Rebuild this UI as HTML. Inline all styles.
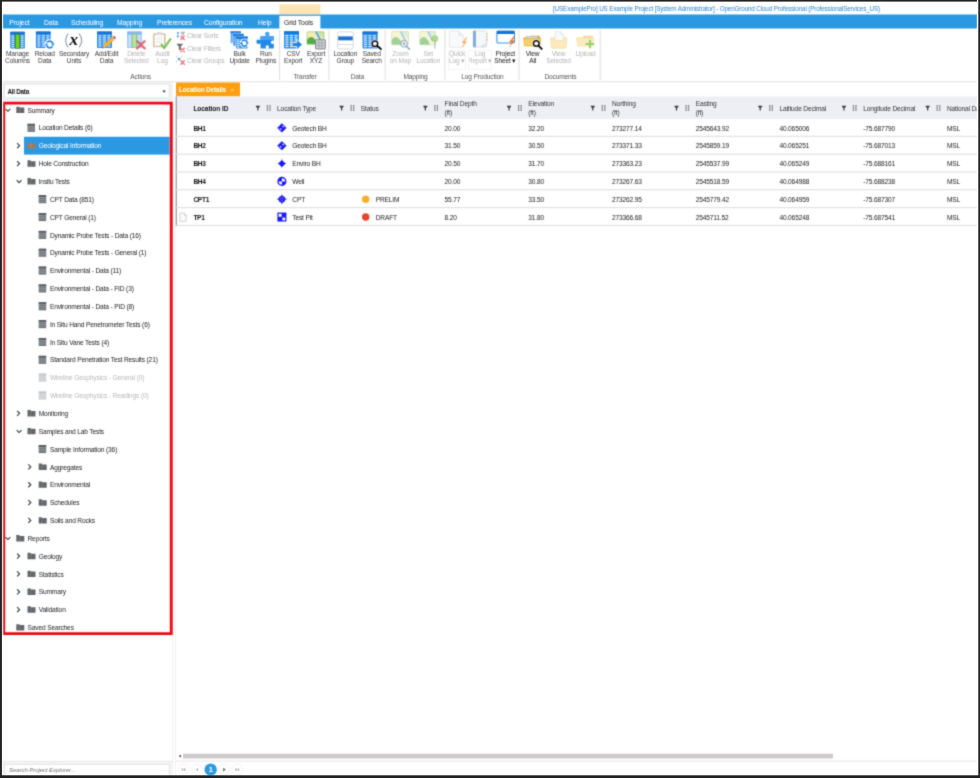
<!DOCTYPE html><html><head><meta charset="utf-8"><title>OpenGround Cloud Professional</title><style>
*{box-sizing:border-box;margin:0;padding:0}
html,body{width:980px;height:778px;overflow:hidden;background:#fff}
body{font-family:"Liberation Sans",sans-serif;font-size:6.6px;color:#222;position:relative;letter-spacing:-0.15px}
.a{position:absolute}
.t{position:absolute;white-space:nowrap;line-height:8px}
.c{position:absolute;white-space:nowrap;color:#3a3a3a;text-align:center;transform:translateX(-50%);line-height:6.5px}
#wrap{position:absolute;left:0;top:0;width:980px;height:778px;background:#fff;filter:url(#soft)}
#frame{position:absolute;left:0;top:0;z-index:50}
.mi{position:absolute;top:18px;color:#fff;font-size:6.8px;line-height:9px;white-space:nowrap}
.dis{color:#b4b4b4}
.gl{color:#555}
</style></head><body>
<svg width="0" height="0" style="position:absolute"><defs><filter id="soft" x="0" y="0" width="100%" height="100%" color-interpolation-filters="sRGB"><feConvolveMatrix order="3" kernelMatrix="0.026 0.110 0.026 0.110 0.456 0.110 0.026 0.110 0.026" divisor="1" edgeMode="duplicate" preserveAlpha="true"/></filter></defs></svg>
<svg id="frame" width="980" height="778" viewBox="0 0 980 778"><rect x="0" y="0" width="980" height="1.600" fill="#222"/><rect x="0" y="0" width="1.900" height="778" fill="#222"/><rect x="977" y="0" width="1.500" height="778" fill="#fff"/><rect x="978.300" y="0" width="1.700" height="778" fill="#222"/><rect x="0" y="775.300" width="980" height="2.700" fill="#222"/></svg><div id="wrap">
<svg class="a" style="left:0;top:0" width="980" height="778" viewBox="0 0 980 778"><rect x="279.4" y="4.4" width="41.0" height="10.1" fill="#fde4b2"/><rect x="3" y="14.5" width="974" height="14" fill="#2b99e2"/><rect x="279.4" y="15.8" width="41.0" height="13.7" fill="#fff"/><rect x="3" y="81.2" width="974" height="1.0" fill="#e2e2e2"/><rect x="279.1" y="30" width="1" height="50" fill="#dedede"/><rect x="328.40000000000003" y="30" width="1" height="50" fill="#dedede"/><rect x="384.6" y="30" width="1" height="50" fill="#dedede"/><rect x="444.40000000000003" y="30" width="1" height="50" fill="#dedede"/><rect x="518.5" y="30" width="1" height="50" fill="#dedede"/><rect x="599.7" y="30" width="1" height="50" fill="#dedede"/><rect x="2" y="81.8" width="170.8" height="19.6" fill="#f2f2f2"/><rect x="4.5" y="84.2" width="164.8" height="13.8" fill="#fff" stroke="#e2e2e2" stroke-width="0.9"/><path d="M162.300 90.400h3.600l-1.800 2.400z" fill="#3a3a3a"/><rect x="172.2" y="101" width="0.9" height="675" fill="#eeeeee"/><rect x="175.2" y="226" width="0.9" height="550" fill="#eef2f2"/><g transform="translate(5.00,108.00)"><path d="M0.500 0.800l2.400 2.500L5.300 0.800" stroke="#333" stroke-width="1.100" fill="none"/></g><g transform="translate(16.30,106.30)"><path d="M0 0.400h3l0.600 0.900H8v5.500H0z" fill="#63666b"/><path d="M3.300 1.300v5.400" stroke="#fff" stroke-width="0.300" opacity="0.4"/></g><g transform="translate(27.50,123.84)"><rect width="7.500" height="8" fill="#6c7178"/><path d="M0 2.300h7.500M0 4.200h7.500M0 6.100h7.500" stroke="#aeb2b8" stroke-width="0.600"/><rect width="7.500" height="1.500" fill="#555a61"/></g><rect x="24" y="136.77" width="145.6" height="17.84" fill="#2b99e2"/><g transform="translate(16.30,142.69)"><path d="M0.800 0.500l2.500 2.500L0.800 5.500" stroke="#333" stroke-width="1.100" fill="none"/></g><g transform="translate(27.50,141.99)"><path d="M0 0.400h3l0.600 0.900H8v5.500H0z" fill="#a07a5c"/><path d="M3.300 1.300v5.400" stroke="#fff" stroke-width="0.300" opacity="0.4"/></g><g transform="translate(16.30,160.53)"><path d="M0.800 0.500l2.500 2.500L0.800 5.500" stroke="#333" stroke-width="1.100" fill="none"/></g><g transform="translate(27.50,159.84)"><path d="M0 0.400h3l0.600 0.900H8v5.500H0z" fill="#63666b"/><path d="M3.300 1.300v5.400" stroke="#fff" stroke-width="0.300" opacity="0.4"/></g><g transform="translate(16.20,179.38)"><path d="M0.500 0.800l2.400 2.500L5.300 0.800" stroke="#333" stroke-width="1.100" fill="none"/></g><g transform="translate(27.50,177.68)"><path d="M0 0.400h3l0.600 0.900H8v5.500H0z" fill="#63666b"/><path d="M3.300 1.300v5.400" stroke="#fff" stroke-width="0.300" opacity="0.4"/></g><g transform="translate(38.70,195.22)"><rect width="7.500" height="8" fill="#6c7178"/><path d="M0 2.300h7.500M0 4.200h7.500M0 6.100h7.500" stroke="#aeb2b8" stroke-width="0.600"/><rect width="7.500" height="1.500" fill="#555a61"/></g><g transform="translate(38.70,213.07)"><rect width="7.500" height="8" fill="#6c7178"/><path d="M0 2.300h7.500M0 4.200h7.500M0 6.100h7.500" stroke="#aeb2b8" stroke-width="0.600"/><rect width="7.500" height="1.500" fill="#555a61"/></g><g transform="translate(38.70,230.91)"><rect width="7.500" height="8" fill="#6c7178"/><path d="M0 2.300h7.500M0 4.200h7.500M0 6.100h7.500" stroke="#aeb2b8" stroke-width="0.600"/><rect width="7.500" height="1.500" fill="#555a61"/></g><g transform="translate(38.70,248.76)"><rect width="7.500" height="8" fill="#6c7178"/><path d="M0 2.300h7.500M0 4.200h7.500M0 6.100h7.500" stroke="#aeb2b8" stroke-width="0.600"/><rect width="7.500" height="1.500" fill="#555a61"/></g><g transform="translate(38.70,266.61)"><rect width="7.500" height="8" fill="#6c7178"/><path d="M0 2.300h7.500M0 4.200h7.500M0 6.100h7.500" stroke="#aeb2b8" stroke-width="0.600"/><rect width="7.500" height="1.500" fill="#555a61"/></g><g transform="translate(38.70,284.45)"><rect width="7.500" height="8" fill="#6c7178"/><path d="M0 2.300h7.500M0 4.200h7.500M0 6.100h7.500" stroke="#aeb2b8" stroke-width="0.600"/><rect width="7.500" height="1.500" fill="#555a61"/></g><g transform="translate(38.70,302.29)"><rect width="7.500" height="8" fill="#6c7178"/><path d="M0 2.300h7.500M0 4.200h7.500M0 6.100h7.500" stroke="#aeb2b8" stroke-width="0.600"/><rect width="7.500" height="1.500" fill="#555a61"/></g><g transform="translate(38.70,320.14)"><rect width="7.500" height="8" fill="#6c7178"/><path d="M0 2.300h7.500M0 4.200h7.500M0 6.100h7.500" stroke="#aeb2b8" stroke-width="0.600"/><rect width="7.500" height="1.500" fill="#555a61"/></g><g transform="translate(38.70,337.99)"><rect width="7.500" height="8" fill="#6c7178"/><path d="M0 2.300h7.500M0 4.200h7.500M0 6.100h7.500" stroke="#aeb2b8" stroke-width="0.600"/><rect width="7.500" height="1.500" fill="#555a61"/></g><g transform="translate(38.70,355.83)"><rect width="7.500" height="8" fill="#6c7178"/><path d="M0 2.300h7.500M0 4.200h7.500M0 6.100h7.500" stroke="#aeb2b8" stroke-width="0.600"/><rect width="7.500" height="1.500" fill="#555a61"/></g><g transform="translate(38.70,373.67)" opacity="0.35"><rect width="7.500" height="8" fill="#6c7178"/><path d="M0 2.300h7.500M0 4.200h7.500M0 6.100h7.500" stroke="#aeb2b8" stroke-width="0.600"/><rect width="7.500" height="1.500" fill="#555a61"/></g><g transform="translate(38.70,391.52)" opacity="0.35"><rect width="7.500" height="8" fill="#6c7178"/><path d="M0 2.300h7.500M0 4.200h7.500M0 6.100h7.500" stroke="#aeb2b8" stroke-width="0.600"/><rect width="7.500" height="1.500" fill="#555a61"/></g><g transform="translate(16.30,410.37)"><path d="M0.800 0.500l2.500 2.500L0.800 5.500" stroke="#333" stroke-width="1.100" fill="none"/></g><g transform="translate(27.50,409.67)"><path d="M0 0.400h3l0.600 0.900H8v5.500H0z" fill="#63666b"/><path d="M3.300 1.300v5.400" stroke="#fff" stroke-width="0.300" opacity="0.4"/></g><g transform="translate(16.20,429.21)"><path d="M0.500 0.800l2.400 2.500L5.300 0.800" stroke="#333" stroke-width="1.100" fill="none"/></g><g transform="translate(27.50,427.51)"><path d="M0 0.400h3l0.600 0.900H8v5.500H0z" fill="#63666b"/><path d="M3.300 1.300v5.400" stroke="#fff" stroke-width="0.300" opacity="0.4"/></g><g transform="translate(38.70,445.05)"><rect width="7.500" height="8" fill="#6c7178"/><path d="M0 2.300h7.500M0 4.200h7.500M0 6.100h7.500" stroke="#aeb2b8" stroke-width="0.600"/><rect width="7.500" height="1.500" fill="#555a61"/></g><g transform="translate(27.50,463.90)"><path d="M0.800 0.500l2.500 2.500L0.800 5.500" stroke="#333" stroke-width="1.100" fill="none"/></g><g transform="translate(38.70,463.20)"><path d="M0 0.400h3l0.600 0.900H8v5.500H0z" fill="#63666b"/><path d="M3.300 1.300v5.400" stroke="#fff" stroke-width="0.300" opacity="0.4"/></g><g transform="translate(27.50,481.75)"><path d="M0.800 0.500l2.500 2.500L0.800 5.500" stroke="#333" stroke-width="1.100" fill="none"/></g><g transform="translate(38.70,481.05)"><path d="M0 0.400h3l0.600 0.900H8v5.500H0z" fill="#63666b"/><path d="M3.300 1.300v5.400" stroke="#fff" stroke-width="0.300" opacity="0.4"/></g><g transform="translate(27.50,499.59)"><path d="M0.800 0.500l2.500 2.500L0.800 5.500" stroke="#333" stroke-width="1.100" fill="none"/></g><g transform="translate(38.70,498.89)"><path d="M0 0.400h3l0.600 0.900H8v5.500H0z" fill="#63666b"/><path d="M3.300 1.300v5.400" stroke="#fff" stroke-width="0.300" opacity="0.4"/></g><g transform="translate(27.50,517.43)"><path d="M0.800 0.500l2.500 2.500L0.800 5.500" stroke="#333" stroke-width="1.100" fill="none"/></g><g transform="translate(38.70,516.73)"><path d="M0 0.400h3l0.600 0.900H8v5.500H0z" fill="#63666b"/><path d="M3.300 1.300v5.400" stroke="#fff" stroke-width="0.300" opacity="0.4"/></g><g transform="translate(5.00,536.28)"><path d="M0.500 0.800l2.400 2.500L5.300 0.800" stroke="#333" stroke-width="1.100" fill="none"/></g><g transform="translate(16.30,534.58)"><path d="M0 0.400h3l0.600 0.900H8v5.500H0z" fill="#63666b"/><path d="M3.300 1.300v5.400" stroke="#fff" stroke-width="0.300" opacity="0.4"/></g><g transform="translate(16.30,553.12)"><path d="M0.800 0.500l2.500 2.500L0.800 5.500" stroke="#333" stroke-width="1.100" fill="none"/></g><g transform="translate(27.50,552.42)"><path d="M0 0.400h3l0.600 0.900H8v5.500H0z" fill="#63666b"/><path d="M3.300 1.300v5.400" stroke="#fff" stroke-width="0.300" opacity="0.4"/></g><g transform="translate(16.30,570.97)"><path d="M0.800 0.500l2.500 2.500L0.800 5.500" stroke="#333" stroke-width="1.100" fill="none"/></g><g transform="translate(27.50,570.27)"><path d="M0 0.400h3l0.600 0.900H8v5.500H0z" fill="#63666b"/><path d="M3.300 1.300v5.400" stroke="#fff" stroke-width="0.300" opacity="0.4"/></g><g transform="translate(16.30,588.81)"><path d="M0.800 0.500l2.500 2.500L0.800 5.500" stroke="#333" stroke-width="1.100" fill="none"/></g><g transform="translate(27.50,588.11)"><path d="M0 0.400h3l0.600 0.900H8v5.500H0z" fill="#63666b"/><path d="M3.300 1.300v5.400" stroke="#fff" stroke-width="0.300" opacity="0.4"/></g><g transform="translate(16.30,606.66)"><path d="M0.800 0.500l2.500 2.500L0.800 5.500" stroke="#333" stroke-width="1.100" fill="none"/></g><g transform="translate(27.50,605.96)"><path d="M0 0.400h3l0.600 0.900H8v5.500H0z" fill="#63666b"/><path d="M3.300 1.300v5.400" stroke="#fff" stroke-width="0.300" opacity="0.4"/></g><g transform="translate(16.30,623.80)"><path d="M0 0.400h3l0.600 0.900H8v5.500H0z" fill="#63666b"/><path d="M3.300 1.300v5.400" stroke="#fff" stroke-width="0.300" opacity="0.4"/></g><rect x="2" y="761.4" width="170.8" height="15" fill="#f4f4f4"/><rect x="2.0" y="760.9" width="170.8" height="1.0" fill="#e8e8e8"/><rect x="4.5" y="764.3" width="164.8" height="14" fill="#fff" stroke="#e2e2e2" stroke-width="0.9"/><rect x="176.0" y="82.5" width="64.0" height="14.0" fill="#fe9f12"/><rect x="176.0" y="96.4" width="801.0" height="22.6" fill="#eeeff4"/><rect x="175.6" y="96.4" width="1.4" height="129.9" fill="#a4a4a4"/><g transform="translate(255.90,105.70)"><path d="M0 0h4v1L2.600 2.300v2.500H1.400V2.300L0 1z" fill="#3a3a3a"/></g><g transform="translate(266.80,105.20)"><rect x="0" y="0" width="1.300" height="1.300" fill="#5c5c5c"/><rect x="0" y="2.1" width="1.300" height="1.300" fill="#5c5c5c"/><rect x="0" y="4.2" width="1.300" height="1.300" fill="#5c5c5c"/><rect x="2.5" y="0" width="1.300" height="1.300" fill="#5c5c5c"/><rect x="2.5" y="2.1" width="1.300" height="1.300" fill="#5c5c5c"/><rect x="2.5" y="4.2" width="1.300" height="1.300" fill="#5c5c5c"/></g><g transform="translate(339.62,105.70)"><path d="M0 0h4v1L2.600 2.300v2.500H1.400V2.300L0 1z" fill="#3a3a3a"/></g><g transform="translate(350.52,105.20)"><rect x="0" y="0" width="1.300" height="1.300" fill="#5c5c5c"/><rect x="0" y="2.1" width="1.300" height="1.300" fill="#5c5c5c"/><rect x="0" y="4.2" width="1.300" height="1.300" fill="#5c5c5c"/><rect x="2.5" y="0" width="1.300" height="1.300" fill="#5c5c5c"/><rect x="2.5" y="2.1" width="1.300" height="1.300" fill="#5c5c5c"/><rect x="2.5" y="4.2" width="1.300" height="1.300" fill="#5c5c5c"/></g><g transform="translate(423.34,105.70)"><path d="M0 0h4v1L2.600 2.300v2.500H1.400V2.300L0 1z" fill="#3a3a3a"/></g><g transform="translate(434.24,105.20)"><rect x="0" y="0" width="1.300" height="1.300" fill="#5c5c5c"/><rect x="0" y="2.1" width="1.300" height="1.300" fill="#5c5c5c"/><rect x="0" y="4.2" width="1.300" height="1.300" fill="#5c5c5c"/><rect x="2.5" y="0" width="1.300" height="1.300" fill="#5c5c5c"/><rect x="2.5" y="2.1" width="1.300" height="1.300" fill="#5c5c5c"/><rect x="2.5" y="4.2" width="1.300" height="1.300" fill="#5c5c5c"/></g><g transform="translate(507.06,105.70)"><path d="M0 0h4v1L2.600 2.300v2.500H1.400V2.300L0 1z" fill="#3a3a3a"/></g><g transform="translate(517.96,105.20)"><rect x="0" y="0" width="1.300" height="1.300" fill="#5c5c5c"/><rect x="0" y="2.1" width="1.300" height="1.300" fill="#5c5c5c"/><rect x="0" y="4.2" width="1.300" height="1.300" fill="#5c5c5c"/><rect x="2.5" y="0" width="1.300" height="1.300" fill="#5c5c5c"/><rect x="2.5" y="2.1" width="1.300" height="1.300" fill="#5c5c5c"/><rect x="2.5" y="4.2" width="1.300" height="1.300" fill="#5c5c5c"/></g><g transform="translate(590.78,105.70)"><path d="M0 0h4v1L2.600 2.300v2.500H1.400V2.300L0 1z" fill="#3a3a3a"/></g><g transform="translate(601.68,105.20)"><rect x="0" y="0" width="1.300" height="1.300" fill="#5c5c5c"/><rect x="0" y="2.1" width="1.300" height="1.300" fill="#5c5c5c"/><rect x="0" y="4.2" width="1.300" height="1.300" fill="#5c5c5c"/><rect x="2.5" y="0" width="1.300" height="1.300" fill="#5c5c5c"/><rect x="2.5" y="2.1" width="1.300" height="1.300" fill="#5c5c5c"/><rect x="2.5" y="4.2" width="1.300" height="1.300" fill="#5c5c5c"/></g><g transform="translate(674.50,105.70)"><path d="M0 0h4v1L2.600 2.300v2.500H1.400V2.300L0 1z" fill="#3a3a3a"/></g><g transform="translate(685.40,105.20)"><rect x="0" y="0" width="1.300" height="1.300" fill="#5c5c5c"/><rect x="0" y="2.1" width="1.300" height="1.300" fill="#5c5c5c"/><rect x="0" y="4.2" width="1.300" height="1.300" fill="#5c5c5c"/><rect x="2.5" y="0" width="1.300" height="1.300" fill="#5c5c5c"/><rect x="2.5" y="2.1" width="1.300" height="1.300" fill="#5c5c5c"/><rect x="2.5" y="4.2" width="1.300" height="1.300" fill="#5c5c5c"/></g><g transform="translate(758.22,105.70)"><path d="M0 0h4v1L2.600 2.300v2.500H1.400V2.300L0 1z" fill="#3a3a3a"/></g><g transform="translate(769.12,105.20)"><rect x="0" y="0" width="1.300" height="1.300" fill="#5c5c5c"/><rect x="0" y="2.1" width="1.300" height="1.300" fill="#5c5c5c"/><rect x="0" y="4.2" width="1.300" height="1.300" fill="#5c5c5c"/><rect x="2.5" y="0" width="1.300" height="1.300" fill="#5c5c5c"/><rect x="2.5" y="2.1" width="1.300" height="1.300" fill="#5c5c5c"/><rect x="2.5" y="4.2" width="1.300" height="1.300" fill="#5c5c5c"/></g><g transform="translate(841.94,105.70)"><path d="M0 0h4v1L2.600 2.300v2.500H1.400V2.300L0 1z" fill="#3a3a3a"/></g><g transform="translate(852.84,105.20)"><rect x="0" y="0" width="1.300" height="1.300" fill="#5c5c5c"/><rect x="0" y="2.1" width="1.300" height="1.300" fill="#5c5c5c"/><rect x="0" y="4.2" width="1.300" height="1.300" fill="#5c5c5c"/><rect x="2.5" y="0" width="1.300" height="1.300" fill="#5c5c5c"/><rect x="2.5" y="2.1" width="1.300" height="1.300" fill="#5c5c5c"/><rect x="2.5" y="4.2" width="1.300" height="1.300" fill="#5c5c5c"/></g><g transform="translate(925.66,105.70)"><path d="M0 0h4v1L2.600 2.300v2.500H1.400V2.300L0 1z" fill="#3a3a3a"/></g><g transform="translate(936.56,105.20)"><rect x="0" y="0" width="1.300" height="1.300" fill="#5c5c5c"/><rect x="0" y="2.1" width="1.300" height="1.300" fill="#5c5c5c"/><rect x="0" y="4.2" width="1.300" height="1.300" fill="#5c5c5c"/><rect x="2.5" y="0" width="1.300" height="1.300" fill="#5c5c5c"/><rect x="2.5" y="2.1" width="1.300" height="1.300" fill="#5c5c5c"/><rect x="2.5" y="4.2" width="1.300" height="1.300" fill="#5c5c5c"/></g><rect x="176" y="135.75" width="802" height="1.1" fill="#dfdfe2"/><g transform="translate(277.40,123.40)"><path d="M4.500 0.200L8.800 4.500 4.500 8.800 0.200 4.500z" fill="#1818fa" stroke="#1818fa" stroke-width="0.600" stroke-linejoin="round"/><path d="M5.100 3.900V1.900L7.100 3.900zM3.900 5.100V7.100L1.900 5.100z" fill="#fff"/></g><rect x="176" y="153.58" width="802" height="1.1" fill="#dfdfe2"/><g transform="translate(277.40,141.23)"><path d="M4.500 0.200L8.800 4.500 4.500 8.800 0.200 4.500z" fill="#1818fa" stroke="#1818fa" stroke-width="0.600" stroke-linejoin="round"/><path d="M5.100 3.900V1.900L7.100 3.900zM3.900 5.100V7.100L1.900 5.100z" fill="#fff"/></g><rect x="176" y="171.41" width="802" height="1.1" fill="#dfdfe2"/><g transform="translate(277.40,159.06)"><path d="M4.500 0L5.800 3.200 9 4.500 5.800 5.800 4.500 9 3.200 5.800 0 4.500 3.200 3.200z" fill="#1818fa"/><circle cx="4.500" cy="4.500" r="2.600" fill="#1818fa"/></g><rect x="176" y="189.24" width="802" height="1.1" fill="#dfdfe2"/><g transform="translate(277.40,176.89)"><circle cx="4.500" cy="4.500" r="3.900" fill="#fff" stroke="#1818fa" stroke-width="1.300"/><path d="M4.500 4.500V0.600A3.900 3.900 0 0 0 0.600 4.500zM4.500 4.500V8.400A3.900 3.900 0 0 0 8.400 4.500z" fill="#1818fa"/></g><rect x="176" y="207.07" width="802" height="1.1" fill="#dfdfe2"/><g transform="translate(277.40,194.72)"><circle cx="4.500" cy="4.500" r="3.300" fill="#1818fa"/><path d="M4.500 0v9M0 4.500h9" stroke="#1818fa" stroke-width="1.200"/><circle cx="4.500" cy="4.500" r="1.500" fill="none" stroke="#9c9cff" stroke-width="0.500"/></g><circle cx="365.700" cy="199.22" r="3.700" fill="#f9ae2c"/><rect x="176" y="224.9" width="802" height="1.1" fill="#dfdfe2"/><g transform="translate(277.40,212.55)"><rect width="9" height="9" fill="#1818fa"/><rect x="1.200" y="1.200" width="3" height="3" fill="#fff"/><rect x="5" y="5" width="2.800" height="2.800" fill="#fff"/></g><circle cx="365.700" cy="217.05" r="3.700" fill="#e8432e"/><g transform="translate(179.60,212.65)"><path d="M0.400 0.400h4l2.200 2.200v6H0.400z" fill="#fcfcfc" stroke="#bdbdbd" stroke-width="0.700"/><path d="M4.400 0.400v2.200h2.200" fill="none" stroke="#bdbdbd" stroke-width="0.600"/></g><rect x="183.0" y="753.7" width="650.0" height="4.8" fill="#cdcbcc"/><path d="M178.700 756.100l2.200-1.300v2.600z" fill="#333"/><rect x="176.0" y="760.6" width="801.0" height="1.0" fill="#e6e6e6"/><circle cx="183.7" cy="769.600" r="5.500" fill="#fff" stroke="#f0f0f0" stroke-width="0.900"/><circle cx="197.1" cy="769.600" r="5.500" fill="#fff" stroke="#f0f0f0" stroke-width="0.900"/><circle cx="224" cy="769.600" r="5.500" fill="#fff" stroke="#f0f0f0" stroke-width="0.900"/><circle cx="237.2" cy="769.600" r="5.500" fill="#fff" stroke="#f0f0f0" stroke-width="0.900"/><circle cx="210.700" cy="769.600" r="6.200" fill="#2b99e2"/><path d="M182.300 768.200v2.800" stroke="#888" stroke-width="0.700"/><path d="M185.300 768.200l-2 1.400 2 1.400z" fill="#888"/><path d="M198 768.200l-2 1.400 2 1.400z" fill="#999"/><path d="M223.200 767.900l2.400 1.700-2.400 1.700z" fill="#444"/><path d="M238.600 768.200v2.800" stroke="#888" stroke-width="0.700"/><path d="M235.600 768.200l2 1.400-2 1.400z" fill="#888"/></svg>
<div class="t" style="left:553px;top:4.5px;color:#2a86d0;font-size:6.3px;letter-spacing:-0.14px">[USExamplePro] US Example Project [System Administrator] - OpenGround Cloud Professional (ProfessionalServices_US)</div>
<div class="mi" style="left:9.3px">Project</div>
<div class="mi" style="left:44px">Data</div>
<div class="mi" style="left:71px">Scheduling</div>
<div class="mi" style="left:117px">Mapping</div>
<div class="mi" style="left:157px">Preferences</div>
<div class="mi" style="left:204px">Configuration</div>
<div class="mi" style="left:258px">Help</div>
<div class="mi" style="left:284px;color:#222">Grid Tools</div>
<svg class="a" style="left:0;top:0" width="620" height="82" viewBox="0 0 620 82"><g transform="translate(10.2,31.7)"><rect width="14.7" height="16.8" rx="0.8" fill="#2e8fe8"/><rect width="14.7" height="2.6" rx="0.6" fill="#1673d2"/><rect x="1.3" y="3.8" width="2.8" height="1.16" fill="#e4f1fd"/><rect x="10.6" y="3.8" width="2.8" height="1.16" fill="#e4f1fd"/><rect x="1.3" y="5.9" width="2.8" height="1.16" fill="#e4f1fd"/><rect x="10.6" y="5.9" width="2.8" height="1.16" fill="#e4f1fd"/><rect x="1.3" y="8" width="2.8" height="1.16" fill="#e4f1fd"/><rect x="10.6" y="8" width="2.8" height="1.16" fill="#e4f1fd"/><rect x="1.3" y="10.1" width="2.8" height="1.16" fill="#e4f1fd"/><rect x="10.6" y="10.1" width="2.8" height="1.16" fill="#e4f1fd"/><rect x="1.3" y="12.2" width="2.8" height="1.16" fill="#e4f1fd"/><rect x="10.6" y="12.2" width="2.8" height="1.16" fill="#e4f1fd"/><rect x="1.3" y="14.3" width="2.8" height="1.16" fill="#e4f1fd"/><rect x="10.6" y="14.3" width="2.8" height="1.16" fill="#e4f1fd"/><rect x="4.9" y="2.200" width="4.900" height="14.600" fill="#2a7a10"/><rect x="5.600" y="2.900" width="3.500" height="13.300" fill="#70d41c"/></g><g transform="translate(35.9,31.4)"><rect width="14.7" height="16.6" rx="0.8" fill="#2e8fe8"/><rect width="14.7" height="2.6" rx="0.6" fill="#1673d2"/><rect x="1.4" y="3.8" width="3" height="1.14" fill="#e4f1fd"/><rect x="5.9" y="3.8" width="3" height="1.14" fill="#e4f1fd"/><rect x="10.4" y="3.8" width="3" height="1.14" fill="#e4f1fd"/><rect x="1.4" y="5.87" width="3" height="1.14" fill="#e4f1fd"/><rect x="5.9" y="5.87" width="3" height="1.14" fill="#e4f1fd"/><rect x="10.4" y="5.87" width="3" height="1.14" fill="#e4f1fd"/><rect x="1.4" y="7.93" width="3" height="1.14" fill="#e4f1fd"/><rect x="5.9" y="7.93" width="3" height="1.14" fill="#e4f1fd"/><rect x="10.4" y="7.93" width="3" height="1.14" fill="#e4f1fd"/><rect x="1.4" y="10" width="3" height="1.14" fill="#e4f1fd"/><rect x="5.9" y="10" width="3" height="1.14" fill="#e4f1fd"/><rect x="10.4" y="10" width="3" height="1.14" fill="#e4f1fd"/><rect x="1.4" y="12.07" width="3" height="1.14" fill="#e4f1fd"/><rect x="5.9" y="12.07" width="3" height="1.14" fill="#e4f1fd"/><rect x="10.4" y="12.07" width="3" height="1.14" fill="#e4f1fd"/><rect x="1.4" y="14.13" width="3" height="1.14" fill="#e4f1fd"/><rect x="5.9" y="14.13" width="3" height="1.14" fill="#e4f1fd"/><rect x="10.4" y="14.13" width="3" height="1.14" fill="#e4f1fd"/><circle cx="13.8" cy="13.1" r="5.2" fill="#fff"/><circle cx="13.8" cy="13.1" r="3.3" fill="none" stroke="#1b84e6" stroke-width="1.7" stroke-dasharray="6.84 3.52" stroke-dashoffset="-1.76"/><path d="M15.2 12.2h3.6l-1.8 2.3z" fill="#1b84e6"/><path d="M8.8 14h3.6l-1.8-2.3z" fill="#1b84e6"/></g><g transform="translate(64.9,33.2)"><text x="8.700" y="11.900" font-family="Liberation Serif,serif" font-style="italic" font-weight="bold" font-size="17" text-anchor="middle" fill="#0a0a0a">x</text><path d="M3.300 0.300Q-1.800 7.200 3.300 14.200" stroke="#7e8796" stroke-width="1" fill="none"/><path d="M14.200 0.300Q19.300 7.200 14.200 14.200" stroke="#7e8796" stroke-width="1" fill="none"/></g><g transform="translate(97,31.4)"><rect width="15" height="16.6" rx="0.8" fill="#2e8fe8"/><rect width="15" height="2.6" rx="0.6" fill="#1673d2"/><rect x="1.4" y="3.8" width="3" height="1.14" fill="#e4f1fd"/><rect x="5.9" y="3.8" width="3" height="1.14" fill="#e4f1fd"/><rect x="10.4" y="3.8" width="3" height="1.14" fill="#e4f1fd"/><rect x="1.4" y="5.87" width="3" height="1.14" fill="#e4f1fd"/><rect x="5.9" y="5.87" width="3" height="1.14" fill="#e4f1fd"/><rect x="10.4" y="5.87" width="3" height="1.14" fill="#e4f1fd"/><rect x="1.4" y="7.93" width="3" height="1.14" fill="#e4f1fd"/><rect x="5.9" y="7.93" width="3" height="1.14" fill="#e4f1fd"/><rect x="10.4" y="7.93" width="3" height="1.14" fill="#e4f1fd"/><rect x="1.4" y="10" width="3" height="1.14" fill="#e4f1fd"/><rect x="5.9" y="10" width="3" height="1.14" fill="#e4f1fd"/><rect x="10.4" y="10" width="3" height="1.14" fill="#e4f1fd"/><rect x="1.4" y="12.07" width="3" height="1.14" fill="#e4f1fd"/><rect x="5.9" y="12.07" width="3" height="1.14" fill="#e4f1fd"/><rect x="10.4" y="12.07" width="3" height="1.14" fill="#e4f1fd"/><rect x="1.4" y="14.13" width="3" height="1.14" fill="#e4f1fd"/><rect x="5.9" y="14.13" width="3" height="1.14" fill="#e4f1fd"/><rect x="10.4" y="14.13" width="3" height="1.14" fill="#e4f1fd"/><g transform="translate(5.300,16.900) rotate(-42.200)"><path d="M0 0L3.400-1.800V1.800z" fill="#d9b48a"/><path d="M0 0L1.300-0.700V0.700z" fill="#3a2a1a"/><rect x="3.400" y="-1.800" width="10.600" height="3.600" fill="#f5a21c"/><rect x="3.400" y="-0.600" width="10.600" height="1.200" fill="#ffc040"/><rect x="14" y="-1.800" width="1" height="3.600" fill="#b8b8b8"/><rect x="15" y="-1.800" width="2.300" height="3.600" rx="0.700" fill="#df6f55"/></g></g><g transform="translate(127.1,31.6)" opacity="0.5"><rect width="14.7" height="16.4" rx="0.8" fill="#2e8fe8"/><rect width="14.7" height="2.6" rx="0.6" fill="#1673d2"/><rect x="1.3" y="3.8" width="2.8" height="1.12" fill="#e4f1fd"/><rect x="10.6" y="3.8" width="2.8" height="1.12" fill="#e4f1fd"/><rect x="1.3" y="5.83" width="2.8" height="1.12" fill="#e4f1fd"/><rect x="10.6" y="5.83" width="2.8" height="1.12" fill="#e4f1fd"/><rect x="1.3" y="7.87" width="2.8" height="1.12" fill="#e4f1fd"/><rect x="10.6" y="7.87" width="2.8" height="1.12" fill="#e4f1fd"/><rect x="1.3" y="9.9" width="2.8" height="1.12" fill="#e4f1fd"/><rect x="10.6" y="9.9" width="2.8" height="1.12" fill="#e4f1fd"/><rect x="1.3" y="11.93" width="2.8" height="1.12" fill="#e4f1fd"/><rect x="10.6" y="11.93" width="2.8" height="1.12" fill="#e4f1fd"/><rect x="1.3" y="13.97" width="2.8" height="1.12" fill="#e4f1fd"/><rect x="10.6" y="13.97" width="2.8" height="1.12" fill="#e4f1fd"/><rect x="4.9" y="2.200" width="4.900" height="14.200" fill="#2a7a10"/><rect x="5.600" y="2.900" width="3.500" height="12.900" fill="#70d41c"/></g><g transform="translate(127.1,31.6)"><path d="M10 9.600l7.600 7.200M17.600 9.600l-7.600 7.200" stroke="#e2555c" stroke-width="2.300" stroke-linecap="round" opacity="0.85"/></g><g transform="translate(152.9,31.9)" opacity="0.6"><rect x="0" y="1.400" width="12.800" height="14" rx="1.200" fill="#c9a06c"/><rect x="1.700" y="3" width="9.400" height="10.800" fill="#fbfbfc"/><rect x="3.900" y="0" width="5" height="3" rx="1" fill="#c4c4c4"/><rect x="3" y="5.2" width="6.800" height="0.600" fill="#d4d4d8"/><rect x="3" y="7" width="6.800" height="0.600" fill="#d4d4d8"/><rect x="3" y="8.8" width="6.800" height="0.600" fill="#d4d4d8"/><rect x="3" y="10.6" width="6.800" height="0.600" fill="#d4d4d8"/></g><g transform="translate(152.9,31.9)"><path d="M8.700 12.800l2.600 3.400 6.200-9" stroke="#69be48" stroke-width="2.300" fill="none" stroke-linecap="round" stroke-linejoin="round" opacity="0.85"/></g><g transform="translate(176,31.5)"><path d="M1.900 0.700v5M0.800 1.800L1.900 0.500 3 1.800M0.800 4.600L1.900 5.900 3 4.600" stroke="#4a9ff0" stroke-width="0.900" fill="none"/><path d="M4.700 0.800h4.200M5.300 2.200h3M5.900 3.600h1.800" stroke="#9a9a9a" stroke-width="0.900"/><path d="M4.9 4.6l3.400 3.400M8.3 4.6l-3.400 3.400" stroke="#e8555c" stroke-width="1.300" stroke-linecap="round" opacity="0.85"/></g><g transform="translate(176,43.5)"><path d="M0.300 0.300h7l-2.600 2.900v3.600h-1.800v-3.600z" fill="#6e6e6e"/><path d="M4.9 4.8l3.400 3.400M8.3 4.8l-3.400 3.400" stroke="#e8555c" stroke-width="1.300" stroke-linecap="round" opacity="0.85"/></g><g transform="translate(176,56)"><rect x="1.900" y="1.900" width="2.300" height="2.300" fill="#4a9ff0"/><path d="M0.300 0.300l1 1M5.800 0.300l-1 1M0.300 5.800l1-1" stroke="#8a8a8a" stroke-width="0.700"/><path d="M4.9 4.8l3.400 3.400M8.3 4.8l-3.400 3.400" stroke="#e8555c" stroke-width="1.300" stroke-linecap="round" opacity="0.85"/></g><g transform="translate(230.4,31.2)"><rect x="0" y="0" width="10.5" height="12" rx="0.6" fill="#5aa8ee" stroke="#fff" stroke-width="0.500"/><rect x="0" y="0" width="10.5" height="2" fill="#2a86de"/><rect x="2.6" y="2.6" width="10.8" height="12.2" rx="0.6" fill="#4a9fec" stroke="#fff" stroke-width="0.500"/><rect x="2.6" y="2.6" width="10.8" height="2" fill="#2080dc"/><rect x="5.4" y="5.3" width="12" height="12.3" rx="0.6" fill="#3a96ea" stroke="#fff" stroke-width="0.500"/><rect x="5.4" y="5.3" width="12" height="2" fill="#1673d2"/><rect x="6.4" y="8.3" width="2.600" height="1" fill="#d8ebfc"/><rect x="6.4" y="10.1" width="2.600" height="1" fill="#d8ebfc"/><rect x="6.4" y="11.9" width="2.600" height="1" fill="#d8ebfc"/><rect x="6.4" y="13.7" width="2.600" height="1" fill="#d8ebfc"/><rect x="6.4" y="15.5" width="2.600" height="1" fill="#d8ebfc"/><circle cx="13.9" cy="11.9" r="4.6" fill="#fff"/><circle cx="13.9" cy="11.9" r="3" fill="none" stroke="#1b84e6" stroke-width="1.6" stroke-dasharray="6.22 3.2" stroke-dashoffset="-1.6"/><path d="M15 11h3.6l-1.8 2.3z" fill="#1b84e6"/><path d="M9.2 12.8h3.6l-1.8-2.3z" fill="#1b84e6"/></g><g transform="translate(256,31.2)"><rect x="4.500" y="4.900" width="13.300" height="12.400" rx="0.800" fill="#2188e8"/><rect x="4.500" y="4.900" width="13.300" height="4" rx="0.800" fill="#46a2f2"/><circle cx="11.300" cy="2.900" r="2.300" fill="#46a2f2"/><rect x="10.100" y="3.500" width="2.400" height="2.500" fill="#46a2f2"/><circle cx="2.600" cy="10.600" r="2.300" fill="#2188e8"/><rect x="3.300" y="9.400" width="2.400" height="2.400" fill="#2188e8"/><circle cx="16.600" cy="11" r="1.700" fill="#fff"/><rect x="16.600" y="10.100" width="1.600" height="1.800" fill="#fff"/><circle cx="11.300" cy="15.700" r="1.700" fill="#fff"/><rect x="10.400" y="15.700" width="1.800" height="1.900" fill="#fff"/></g><g transform="translate(284,31.2)"><rect width="15" height="17.2" rx="0.8" fill="#2e8fe8"/><rect width="15" height="2.6" rx="0.6" fill="#1673d2"/><rect x="1.4" y="3.8" width="3" height="1.19" fill="#e4f1fd"/><rect x="5.9" y="3.8" width="3" height="1.19" fill="#e4f1fd"/><rect x="10.4" y="3.8" width="3" height="1.19" fill="#e4f1fd"/><rect x="1.4" y="5.97" width="3" height="1.19" fill="#e4f1fd"/><rect x="5.9" y="5.97" width="3" height="1.19" fill="#e4f1fd"/><rect x="10.4" y="5.97" width="3" height="1.19" fill="#e4f1fd"/><rect x="1.4" y="8.13" width="3" height="1.19" fill="#e4f1fd"/><rect x="5.9" y="8.13" width="3" height="1.19" fill="#e4f1fd"/><rect x="10.4" y="8.13" width="3" height="1.19" fill="#e4f1fd"/><rect x="1.4" y="10.3" width="3" height="1.19" fill="#e4f1fd"/><rect x="5.9" y="10.3" width="3" height="1.19" fill="#e4f1fd"/><rect x="10.4" y="10.3" width="3" height="1.19" fill="#e4f1fd"/><rect x="1.4" y="12.47" width="3" height="1.19" fill="#e4f1fd"/><rect x="5.9" y="12.47" width="3" height="1.19" fill="#e4f1fd"/><rect x="10.4" y="12.47" width="3" height="1.19" fill="#e4f1fd"/><rect x="1.4" y="14.63" width="3" height="1.19" fill="#e4f1fd"/><rect x="5.9" y="14.63" width="3" height="1.19" fill="#e4f1fd"/><rect x="10.4" y="14.63" width="3" height="1.19" fill="#e4f1fd"/><path d="M8 11.400h4.800V8.200l5.600 5.200-5.600 5.200v-3.200H8z" fill="#1b84e6" stroke="#fff" stroke-width="0.800" stroke-linejoin="round"/></g><g transform="translate(307,31.8)"><rect width="17" height="12.4" rx="1" fill="#f7ecb0"/><path d="M0 12.4V7.69q3.4-4.46 6.8-1.24q3.4 2.48 4.25 5.95z" fill="#4fae45"/><path d="M7.65 0h9.35v6.82z" fill="#c6e6a6"/><path d="M8.84 0l5.1 8.93" stroke="#5aaae8" stroke-width="1.9" fill="none"/><rect width="17" height="12.4" rx="1" fill="none" stroke="#8fbf62" stroke-width="0.6"/><rect x="8" y="7.500" width="10.800" height="10.100" rx="1.300" fill="#878b92"/><rect x="9" y="8.500" width="8.800" height="8.100" fill="#cfd2d8"/><path d="M9 11.200h8.800M9 13.900h8.800M11.900 8.500v8.100M14.900 8.500v8.100" stroke="#8f939a" stroke-width="0.600"/></g><g transform="translate(337.3,31.4)"><rect x="0.400" y="0.400" width="15.500" height="17.100" rx="1.500" fill="#fff" stroke="#d0d5da" stroke-width="0.900"/><rect x="0.900" y="5" width="14.500" height="3.900" fill="#1673d2"/><path d="M0.900 13.100h14.500" stroke="#d0d5da" stroke-width="0.800"/></g><g transform="translate(362.5,31.4)"><rect width="15.2" height="17.1" rx="0.8" fill="#2e8fe8"/><rect width="15.2" height="2.6" rx="0.6" fill="#1673d2"/><rect x="1.4" y="3.8" width="3" height="1.18" fill="#e4f1fd"/><rect x="5.9" y="3.8" width="3" height="1.18" fill="#e4f1fd"/><rect x="10.4" y="3.8" width="3" height="1.18" fill="#e4f1fd"/><rect x="1.4" y="5.95" width="3" height="1.18" fill="#e4f1fd"/><rect x="5.9" y="5.95" width="3" height="1.18" fill="#e4f1fd"/><rect x="10.4" y="5.95" width="3" height="1.18" fill="#e4f1fd"/><rect x="1.4" y="8.1" width="3" height="1.18" fill="#e4f1fd"/><rect x="5.9" y="8.1" width="3" height="1.18" fill="#e4f1fd"/><rect x="10.4" y="8.1" width="3" height="1.18" fill="#e4f1fd"/><rect x="1.4" y="10.25" width="3" height="1.18" fill="#e4f1fd"/><rect x="5.9" y="10.25" width="3" height="1.18" fill="#e4f1fd"/><rect x="10.4" y="10.25" width="3" height="1.18" fill="#e4f1fd"/><rect x="1.4" y="12.4" width="3" height="1.18" fill="#e4f1fd"/><rect x="5.9" y="12.4" width="3" height="1.18" fill="#e4f1fd"/><rect x="10.4" y="12.4" width="3" height="1.18" fill="#e4f1fd"/><rect x="1.4" y="14.55" width="3" height="1.18" fill="#e4f1fd"/><rect x="5.9" y="14.55" width="3" height="1.18" fill="#e4f1fd"/><rect x="10.4" y="14.55" width="3" height="1.18" fill="#e4f1fd"/><circle cx="12.4" cy="12.3" r="4" fill="#fff" opacity="0.9"/><circle cx="12.4" cy="12.3" r="2.8" fill="#fff" stroke="#111" stroke-width="1.5"/><path d="M14.5 14.4L18.4 17.7" stroke="#111" stroke-width="2" stroke-linecap="round"/></g><g transform="translate(391.7,31.4)" opacity="0.55"><rect width="16.9" height="13.4" rx="1" fill="#f7ecb0"/><path d="M0 13.4V8.31q3.38-4.82 6.76-1.34q3.38 2.68 4.22 6.43z" fill="#4fae45"/><path d="M7.6 0h9.29v7.37z" fill="#c6e6a6"/><path d="M8.79 0l5.07 9.65" stroke="#5aaae8" stroke-width="1.9" fill="none"/><rect width="16.9" height="13.4" rx="1" fill="none" stroke="#8fbf62" stroke-width="0.6"/></g><g transform="translate(391.7,31.4)" opacity="0.8"><circle cx="12.300" cy="12.300" r="3.200" fill="#eef2f8" stroke="#8fa2bf" stroke-width="1.100"/><circle cx="12.300" cy="12.300" r="1.100" fill="#6d8fc0"/><path d="M14.700 14.700l3 3" stroke="#7c92b5" stroke-width="1.600" stroke-linecap="round"/></g><g transform="translate(419.8,31.4)" opacity="0.55"><rect width="15.7" height="13.4" rx="1" fill="#f7ecb0"/><path d="M0 13.4V8.31q3.14-4.82 6.28-1.34q3.14 2.68 3.92 6.43z" fill="#4fae45"/><path d="M7.06 0h8.63v7.37z" fill="#c6e6a6"/><path d="M8.16 0l4.71 9.65" stroke="#5aaae8" stroke-width="1.9" fill="none"/><rect width="15.7" height="13.4" rx="1" fill="none" stroke="#8fbf62" stroke-width="0.6"/></g><g transform="translate(419.8,31.4)" opacity="0.85"><path d="M15.100 9.500v7.800" stroke="#a9b3c0" stroke-width="1.200"/><circle cx="15.100" cy="7.300" r="3.100" fill="#a4d482" stroke="#8cc468" stroke-width="0.500"/></g><g transform="translate(449,30.4)" opacity="0.65"><path d="M0.400 0.400h9.300l4.600 4.600v11.800H0.400z" fill="#f6f8fb" stroke="#cdd3da" stroke-width="0.800"/><path d="M9.700 0.400v4.600h4.600" fill="#e4e8ee" stroke="#cdd3da" stroke-width="0.700"/></g><g transform="translate(449,30.4)" opacity="0.85"><path transform="translate(17,7) scale(1.05)" d="M0 0l-4 5.400h2.300l-2.700 5 5.600-6.600h-2.400l2.600-3.800z" fill="#f6a550"/></g><g transform="translate(472.7,30.4)" opacity="0.7"><rect x="0.400" y="0.400" width="13.600" height="16.400" rx="1" fill="#f3f4f7" stroke="#c6ccd4" stroke-width="0.800"/><rect x="0.400" y="0.400" width="2.800" height="16.400" fill="#3f8acb"/><path d="M14.300 2.800v1.800" stroke="#6cc04a" stroke-width="1"/><path d="M14.300 5.600v1.800" stroke="#e9a040" stroke-width="1"/><path d="M14.300 8.400v1.800" stroke="#e0605a" stroke-width="1"/><path d="M9 16.800q4.600-.600 5-5.200-1.200 3.400-5 3.600z" fill="#d6dae0" stroke="#bfc5cd" stroke-width="0.500"/></g><g transform="translate(496.3,30.4)"><rect x="0.600" y="0.600" width="17.600" height="12" rx="1.200" fill="#fff" stroke="#3896ea" stroke-width="1.100"/><rect x="0.600" y="0.600" width="17.600" height="3" fill="#1673d2"/><path transform="translate(17.2,6) scale(1.1)" d="M0 0l-4 5.400h2.300l-2.700 5 5.600-6.600h-2.400l2.600-3.800z" fill="#f26f1a"/></g><g transform="translate(523.3,34.5)"><path d="M0.600 3h5.400l1.300-1.700h9.200v3.200H0.600z" fill="#dfa637"/><rect x="3" y="1.800" width="11.600" height="3" fill="#dcdcdc" stroke="#a8a8a8" stroke-width="0.400"/><path d="M0.200 4h17.500l-1.100 7.500H1.300z" fill="#f7d068" stroke="#d9a437" stroke-width="0.600"/><circle cx="13" cy="9" r="4" fill="#fff" opacity="0.9"/><circle cx="13" cy="9" r="2.8" fill="#fff" stroke="#111" stroke-width="1.5"/><path d="M15.1 11.1L18.4 14.4" stroke="#111" stroke-width="2" stroke-linecap="round"/></g><g transform="translate(550.2,31.3)" opacity="0.65"><path d="M5 0.400h5.600l3 3v7H5z" fill="#f6f8fb" stroke="#cdd3da" stroke-width="0.800"/><path d="M10.600 0.400v3h3" fill="#e4e8ee" stroke="#cdd3da" stroke-width="0.600"/><path d="M0.400 6.500h3.600v2.700h9.200V6.500h3.600l-.900 10.400H1.300z" fill="#fbe09a" stroke="#eccb78" stroke-width="0.700"/></g><g transform="translate(576.3,34.5)" opacity="0.65"><path d="M0.600 3h5.400l1.300-1.700h9.200v3.200H0.600z" fill="#ecc478"/><path d="M0.200 3.600h17.500l-1.100 7.900H1.300z" fill="#fbe09a" stroke="#eccb78" stroke-width="0.600"/></g><g transform="translate(576.3,34.5)" opacity="0.9"><path d="M13.700 5.200v8.600M9.400 9.500h8.600" stroke="#8ccf68" stroke-width="2.100"/></g></svg>
<div class="c" style="left:17.5px;top:51.3px">Manage<br>Columns</div>
<div class="c" style="left:44.7px;top:51.3px">Reload<br>Data</div>
<div class="c" style="left:74px;top:51.3px">Secondary<br>Units</div>
<div class="c" style="left:106.5px;top:51.3px">Add/Edit<br>Data</div>
<div class="c dis" style="left:136.3px;top:51.3px">Delete<br>Selected</div>
<div class="c dis" style="left:162.4px;top:51.3px">Audit<br>Log</div>
<div class="t dis" style="left:187px;top:32px">Clear Sorts</div>
<div class="t dis" style="left:187px;top:45px">Clear Filters</div>
<div class="t dis" style="left:187px;top:57px">Clear Groups</div>
<div class="c" style="left:239.6px;top:51.3px">Bulk<br>Update</div>
<div class="c" style="left:265.9px;top:51.3px">Run<br>Plugins</div>
<div class="c" style="left:293.2px;top:51.3px">CSV<br>Export</div>
<div class="c" style="left:316px;top:51.3px">Export<br>XYZ</div>
<div class="c" style="left:345.3px;top:51.3px">Location<br>Group</div>
<div class="c" style="left:371.7px;top:51.3px">Saved<br>Search</div>
<div class="c dis" style="left:400.4px;top:51.3px">Zoom<br>on Map</div>
<div class="c dis" style="left:428.3px;top:51.3px">Set<br>Location</div>
<div class="c dis" style="left:457px;top:51.3px">Quick<br>Log &#9662;</div>
<div class="c dis" style="left:480px;top:51.3px">Log<br>Report &#9662;</div>
<div class="c" style="left:505.3px;top:51.3px;color:#1c1c1c">Project<br>Sheet &#9662;</div>
<div class="c" style="left:532.6px;top:51.3px;color:#1c1c1c">View<br>All</div>
<div class="c dis" style="left:558.6px;top:51.3px">View<br>Selected</div>
<div class="c dis" style="left:585.6px;top:51.3px">Upload</div>
<div class="c gl" style="left:140.6px;top:72.500px;line-height:8px">Actions</div>
<div class="c gl" style="left:305px;top:72.500px;line-height:8px">Transfer</div>
<div class="c gl" style="left:357.3px;top:72.500px;line-height:8px">Data</div>
<div class="c gl" style="left:415.5px;top:72.500px;line-height:8px">Mapping</div>
<div class="c gl" style="left:482.4px;top:72.500px;line-height:8px">Log Production</div>
<div class="c gl" style="left:560.4px;top:72.500px;line-height:8px">Documents</div>
<div class="a" style="left:447.500px;top:49.500px;width:18px;height:20px;border:1px solid #f5f5f5"></div>
<div class="a" style="left:468px;top:49.500px;width:24px;height:20px;border:1px solid #f5f5f5"></div>
<div class="t" style="left:7.500px;top:88px;color:#111;font-weight:bold;letter-spacing:-0.3px;font-size:6.400px">All Data</div>
<svg class="a" style="left:0;top:0;z-index:5;pointer-events:none" width="180" height="640" viewBox="0 0 180 640"><path d="M3.200 101.700H172.700V635H3.200zM5.200 104.500V632.200H169.800V104.500z" fill="#f00612" fill-rule="evenodd"/></svg>
<div class="t" style="left:27.5px;top:107px;color:#222">Summary</div>
<div class="t" style="left:38.7px;top:124px;color:#222">Location Details (6)</div>
<div class="t" style="left:38.7px;top:142px;color:#fff">Geological Information</div>
<div class="t" style="left:38.7px;top:160px;color:#222">Hole Construction</div>
<div class="t" style="left:38.7px;top:178px;color:#222">Insitu Tests</div>
<div class="t" style="left:49.9px;top:196px;color:#222">CPT Data (851)</div>
<div class="t" style="left:49.9px;top:214px;color:#222">CPT General (1)</div>
<div class="t" style="left:49.9px;top:232px;color:#222">Dynamic Probe Tests - Data (16)</div>
<div class="t" style="left:49.9px;top:249px;color:#222">Dynamic Probe Tests - General (1)</div>
<div class="t" style="left:49.9px;top:267px;color:#222">Environmental - Data (11)</div>
<div class="t" style="left:49.9px;top:285px;color:#222">Environmental - Data - FID (3)</div>
<div class="t" style="left:49.9px;top:303px;color:#222">Environmental - Data - PID (8)</div>
<div class="t" style="left:49.9px;top:321px;color:#222">In Situ Hand Penetrometer Tests (6)</div>
<div class="t" style="left:49.9px;top:339px;color:#222">In Situ Vane Tests (4)</div>
<div class="t" style="left:49.9px;top:356px;color:#222">Standard Penetration Test Results (21)</div>
<div class="t" style="left:49.9px;top:374px;color:#b9b9b9">Wireline Geophysics - General (0)</div>
<div class="t" style="left:49.9px;top:392px;color:#b9b9b9">Wireline Geophysics - Readings (0)</div>
<div class="t" style="left:38.7px;top:410px;color:#222">Monitoring</div>
<div class="t" style="left:38.7px;top:428px;color:#222">Samples and Lab Tests</div>
<div class="t" style="left:49.9px;top:446px;color:#222">Sample Information (36)</div>
<div class="t" style="left:49.9px;top:464px;color:#222">Aggregates</div>
<div class="t" style="left:49.9px;top:481px;color:#222">Environmental</div>
<div class="t" style="left:49.9px;top:499px;color:#222">Schedules</div>
<div class="t" style="left:49.9px;top:517px;color:#222">Soils and Rocks</div>
<div class="t" style="left:27.5px;top:535px;color:#222">Reports</div>
<div class="t" style="left:38.7px;top:553px;color:#222">Geology</div>
<div class="t" style="left:38.7px;top:571px;color:#222">Statistics</div>
<div class="t" style="left:38.7px;top:588px;color:#222">Summary</div>
<div class="t" style="left:38.7px;top:606px;color:#222">Validation</div>
<div class="t" style="left:27.5px;top:624px;color:#222">Saved Searches</div>
<div class="t" style="left:9px;top:766px;color:#777;font-style:italic;font-size:6.200px">Search Project Explorer...</div>
<div class="t" style="left:179px;top:85.500px;color:#fff;font-weight:bold;letter-spacing:-0.200px;font-size:6.500px">Location Details</div>
<div class="t" style="left:230.500px;top:85.500px;color:#fde2b8;font-size:6px">&#215;</div>
<div class="t" style="left:193.4px;top:105px;font-weight:bold;letter-spacing:-0.080px;color:#111;">Location ID</div>
<div class="t" style="left:277.1px;top:105px;color:#333;">Location Type</div>
<div class="t" style="left:360.8px;top:105px;color:#333;">Status</div>
<div class="t" style="left:444.6px;top:100px;color:#333;">Final Depth</div>
<div class="t" style="left:444.6px;top:109px;color:#333;">(ft)</div>
<div class="t" style="left:528.3px;top:100px;color:#333;">Elevation</div>
<div class="t" style="left:528.3px;top:109px;color:#333;">(ft)</div>
<div class="t" style="left:612.0px;top:100px;color:#333;">Northing</div>
<div class="t" style="left:612.0px;top:109px;color:#333;">(ft)</div>
<div class="t" style="left:695.7px;top:100px;color:#333;">Easting</div>
<div class="t" style="left:695.7px;top:109px;color:#333;">(ft)</div>
<div class="t" style="left:779.4px;top:105px;color:#333;">Latitude Decimal</div>
<div class="t" style="left:863.2px;top:105px;color:#333;">Longitude Decimal</div>
<div class="t" style="left:946.9px;top:105px;color:#333;">National Datum</div>
<div class="t" style="left:193.4px;top:125px;font-weight:bold;letter-spacing:-0.300px;color:#111">BH1</div>
<div class="t" style="left:292.300px;top:125px">Geotech BH</div>
<div class="t" style="left:444.6px;top:125px;">20.00</div>
<div class="t" style="left:528.3px;top:125px;">32.20</div>
<div class="t" style="left:612.0px;top:125px;">273277.14</div>
<div class="t" style="left:695.7px;top:125px;">2545643.92</div>
<div class="t" style="left:779.4px;top:125px;">40.065006</div>
<div class="t" style="left:863.2px;top:125px;">-75.687790</div>
<div class="t" style="left:946.9px;top:125px;">MSL</div>
<div class="t" style="left:193.4px;top:142px;font-weight:bold;letter-spacing:-0.300px;color:#111">BH2</div>
<div class="t" style="left:292.300px;top:142px">Geotech BH</div>
<div class="t" style="left:444.6px;top:142px;">31.50</div>
<div class="t" style="left:528.3px;top:142px;">30.50</div>
<div class="t" style="left:612.0px;top:142px;">273371.33</div>
<div class="t" style="left:695.7px;top:142px;">2545859.19</div>
<div class="t" style="left:779.4px;top:142px;">40.065251</div>
<div class="t" style="left:863.2px;top:142px;">-75.687013</div>
<div class="t" style="left:946.9px;top:142px;">MSL</div>
<div class="t" style="left:193.4px;top:160px;font-weight:bold;letter-spacing:-0.300px;color:#111">BH3</div>
<div class="t" style="left:292.300px;top:160px">Enviro BH</div>
<div class="t" style="left:444.6px;top:160px;">20.50</div>
<div class="t" style="left:528.3px;top:160px;">31.70</div>
<div class="t" style="left:612.0px;top:160px;">273363.23</div>
<div class="t" style="left:695.7px;top:160px;">2545537.99</div>
<div class="t" style="left:779.4px;top:160px;">40.065249</div>
<div class="t" style="left:863.2px;top:160px;">-75.688161</div>
<div class="t" style="left:946.9px;top:160px;">MSL</div>
<div class="t" style="left:193.4px;top:178px;font-weight:bold;letter-spacing:-0.300px;color:#111">BH4</div>
<div class="t" style="left:292.300px;top:178px">Well</div>
<div class="t" style="left:444.6px;top:178px;">20.00</div>
<div class="t" style="left:528.3px;top:178px;">30.80</div>
<div class="t" style="left:612.0px;top:178px;">273267.63</div>
<div class="t" style="left:695.7px;top:178px;">2545518.59</div>
<div class="t" style="left:779.4px;top:178px;">40.064988</div>
<div class="t" style="left:863.2px;top:178px;">-75.688238</div>
<div class="t" style="left:946.9px;top:178px;">MSL</div>
<div class="t" style="left:193.4px;top:196px;font-weight:bold;letter-spacing:-0.300px;color:#111">CPT1</div>
<div class="t" style="left:292.300px;top:196px">CPT</div>
<div class="t" style="left:375.700px;top:196px">PRELIM</div>
<div class="t" style="left:444.6px;top:196px;">55.77</div>
<div class="t" style="left:528.3px;top:196px;">33.50</div>
<div class="t" style="left:612.0px;top:196px;">273262.95</div>
<div class="t" style="left:695.7px;top:196px;">2545779.42</div>
<div class="t" style="left:779.4px;top:196px;">40.064959</div>
<div class="t" style="left:863.2px;top:196px;">-75.687307</div>
<div class="t" style="left:946.9px;top:196px;">MSL</div>
<div class="t" style="left:193.4px;top:214px;font-weight:bold;letter-spacing:-0.300px;color:#111">TP1</div>
<div class="t" style="left:292.300px;top:214px">Test Pit</div>
<div class="t" style="left:375.700px;top:214px">DRAFT</div>
<div class="t" style="left:444.6px;top:214px;">8.20</div>
<div class="t" style="left:528.3px;top:214px;">31.80</div>
<div class="t" style="left:612.0px;top:214px;">273366.68</div>
<div class="t" style="left:695.7px;top:214px;">2545711.52</div>
<div class="t" style="left:779.4px;top:214px;">40.065248</div>
<div class="t" style="left:863.2px;top:214px;">-75.687541</div>
<div class="t" style="left:946.9px;top:214px;">MSL</div>
<div class="t" style="left:208.700px;top:765px;color:#fff;font-size:7.500px;font-weight:bold;line-height:9px">1</div>
</div></body></html>
